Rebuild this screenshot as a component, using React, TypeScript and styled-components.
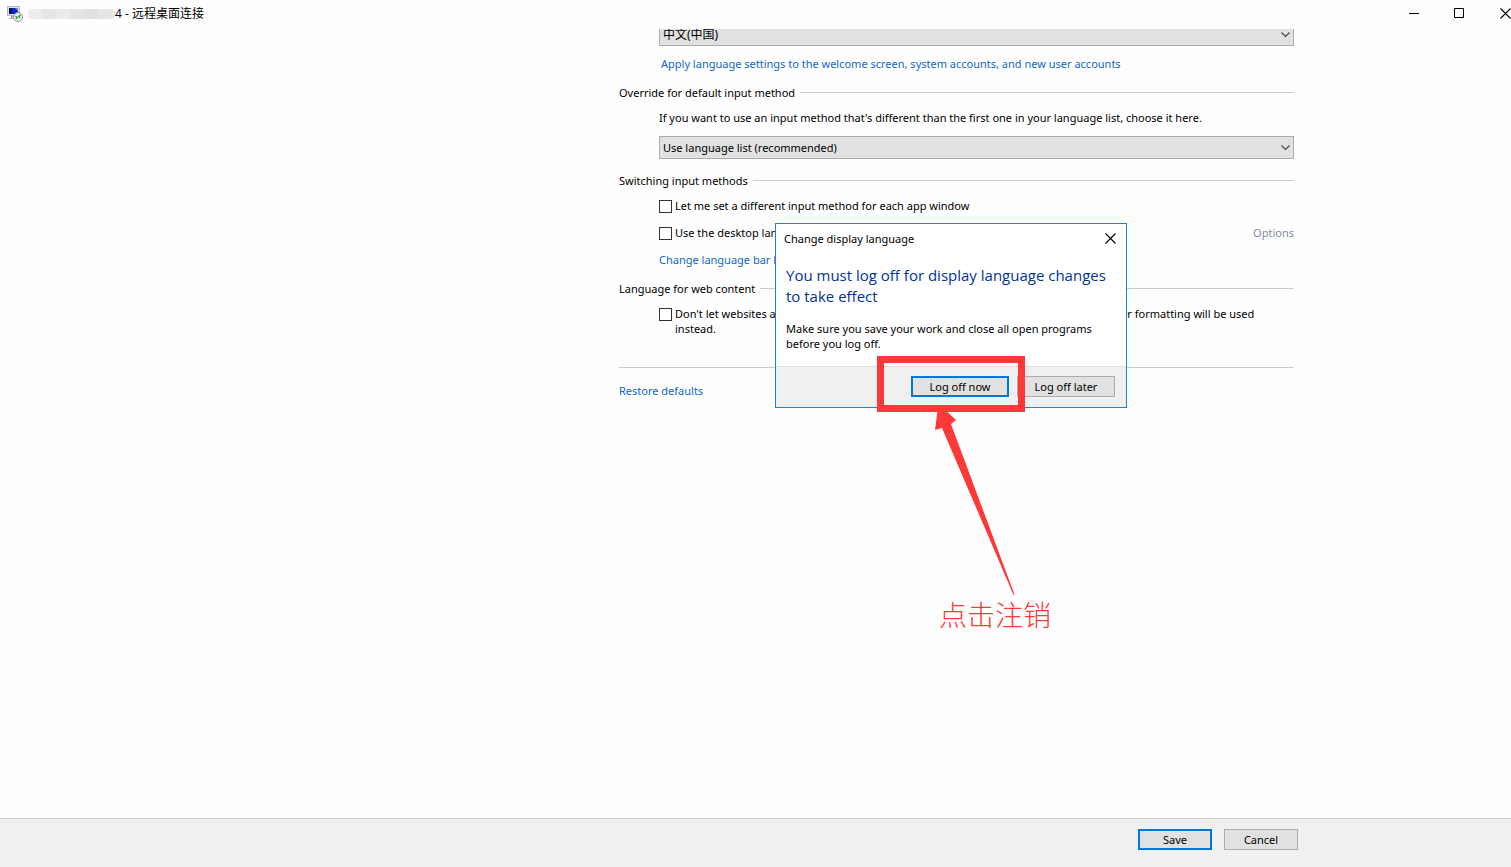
import React from 'react';
import styled, { createGlobalStyle } from 'styled-components';

const GlobalStyle = createGlobalStyle`
  * { box-sizing: border-box; }
  body {
    margin: 0;
    background: #fefefe;
    color: #000;
    font: 11px/15px "Noto Sans", "Noto Sans CJK SC", sans-serif;
  }
  button, select, input { font: inherit; color: inherit; }
`;

const Page = styled.div`
  display: flex;
  flex-direction: column;
  min-height: 100vh;
`;

const TitleBar = styled.header`
  display: flex;
  align-items: center;
  height: 29px;
  padding-left: 7px;
  overflow: hidden;
`;

const AppTitle = styled.h1`
  display: flex;
  align-items: center;
  margin: 0;
  padding-bottom: 2px;
  font: 12px/18px "Open Sans", "Noto Sans CJK SC", sans-serif;
`;

const Redacted = styled.span`
  width: 87px;
  height: 10px;
  margin-left: 5px;
  border-radius: 4px;
  background: linear-gradient(90deg, #ededed 0 14px, #e6e6e6 14px 28px, #ebebec 28px 42px, #e4e4e6 42px 56px, #e0e1e3 56px 70px, #e6e6e6 70px);
`;

const WindowControls = styled.div`
  display: flex;
  margin: 0 -19px 3px auto;
`;

const GlyphButton = styled.button<{ $width: number }>`
  display: flex;
  align-items: center;
  justify-content: center;
  width: ${p => p.$width}px;
  height: 26px;
  padding: 0;
  border: 0;
  background: transparent;
`;

const ScrollArea = styled.main`
  flex: 1;
  overflow: hidden;
  padding: 0 217px 0 619px;
`;

const Settings = styled.div`
  position: relative;
  display: flow-root;
`;

const Indented = styled.div`
  padding-left: 40px;
`;

const SelectFrame = styled.div<{ $scrolled?: boolean }>`
  position: relative;
  margin-top: ${p => (p.$scrolled ? -6 : 11)}px;
  font-size: ${p => (p.$scrolled ? 12 : 11)}px;

  svg {
    position: absolute;
    top: 8px;
    right: 4px;
    pointer-events: none;
  }
`;

const Select = styled.select`
  display: block;
  width: 100%;
  height: 23px;
  padding: 0 20px 0 3px;
  border: 1px solid #adadad;
  border-radius: 0;
  background: #e1e1e1;
  appearance: none;
`;

const Link = styled.a<{ $muted?: boolean }>`
  color: ${p => (p.$muted ? '#838a9a' : '#0f66d0')};
  text-decoration: none;
`;

const LinkLine = styled.div`
  padding: 10px 0 0 2px;
`;

const SectionTitle = styled.h2`
  display: flex;
  align-items: center;
  gap: 5px;
  margin: 14px 0 10px;
  font-size: 11px;
  line-height: 15px;
  font-weight: 400;

  &::after {
    content: "";
    flex: 1;
    height: 1px;
    background: #cccccc;
  }
`;

const Text = styled.p`
  margin: 0;
`;

const OptionRow = styled.div`
  display: flex;
  justify-content: space-between;
  margin-bottom: 12px;
`;

const CheckLabel = styled.label`
  display: flex;
  align-items: flex-start;
  gap: 3px;
  padding-right: 24px;
`;

const Checkbox = styled.input`
  flex: none;
  width: 13px;
  height: 13px;
  margin: 2px 0 0;
  border: 1px solid #333;
  background: #fff;
  appearance: none;
`;

const Restore = styled.div`
  margin-top: 31px;
  padding-top: 15px;
  border-top: 1px solid #cccccc;
`;

const Dialog = styled.section`
  position: absolute;
  top: 194px;
  left: 156px;
  width: 352px;
  border: 1px solid #1883d7;
  background: #fff;
`;

const DialogHeader = styled.header`
  display: flex;
  align-items: center;
  justify-content: space-between;
  height: 28px;
  padding-left: 8px;
`;

const DialogName = styled.h2`
  margin: 0;
  font-size: 11px;
  font-weight: 400;
`;

const DialogBody = styled.div`
  height: 114px;
  padding: 13px 10px 0;
`;

const Instruction = styled.h3`
  margin: 0 0 14px;
  color: #003399;
  font: 400 15px/21px "Open Sans", sans-serif;
  white-space: nowrap;
`;

const DialogActions = styled.div`
  display: flex;
  justify-content: flex-end;
  gap: 8px;
  height: 41px;
  padding: 9px 11px;
  border-top: 1px solid #dfdfdf;
  background: #f0f0f0;
`;

const Button = styled.button<{ $primary?: boolean; $width: number }>`
  width: ${p => p.$width}px;
  height: 21px;
  padding: 0;
  border: ${p => (p.$primary ? '2px solid #0078d7' : '1px solid #adadad')};
  background: #e1e1e1;
  line-height: 15px;
`;

const Highlight = styled.div`
  position: absolute;
  top: 132px;
  left: 101px;
  width: 148px;
  height: 56px;
  border: 7px solid #fd3838;
  pointer-events: none;
`;

const Arrow = styled.svg`
  position: absolute;
  top: 183px;
  left: 158px;
`;

const Note = styled.p`
  position: absolute;
  top: 370px;
  left: 163px;
  margin: 0;
  color: #fd3838;
  font: 300 28px/40px "Noto Sans CJK SC", serif;
  white-space: nowrap;
`;

const Footer = styled.footer`
  display: flex;
  justify-content: flex-end;
  gap: 12px;
  height: 49px;
  padding: 10px 213px 0 0;
  border-top: 1px solid #cccccc;
  background: #f0f0f0;
`;

const RemoteIcon = () => (
  <svg width="16" height="16" viewBox="0 0 16 16" aria-hidden="true">
    <path d="M.5.5h12v9H.5z" fill="#e3e4e6" stroke="#b4b8bf" />
    <path d="M2 2h9v6H2z" fill="#1226c8" />
    <path d="M2 2h3v6H2z" fill="#071078" />
    <path d="M8 2h3v3z" fill="#6f8af0" />
    <path d="M4 10h5v2H4zM2 12h6v1H2z" fill="#aab0b8" />
    <circle cx="11" cy="11" r="4.500" fill="#f3f5f2" stroke="#8d928f" />
    <path d="M8.500 10l1.800 1.500L8.800 13M13.500 8.800L11.700 10.500l1.600 1.500" fill="none" stroke="#2f9d2a" strokeWidth="1.300" />
  </svg>
);

const CloseGlyph = () => (
  <svg width="11" height="11" viewBox="0 0 11 11" aria-hidden="true">
    <path d="M.5.5l10 10M10.500.5l-10 10" stroke="#000" strokeWidth="1.100" />
  </svg>
);

const Chevron = () => (
  <svg width="9" height="7" viewBox="0 0 9 7" aria-hidden="true">
    <path d="M.5 1.500l4 4 4-4" fill="none" stroke="#444" strokeWidth="1.200" />
  </svg>
);

export default function App() {
  return (
    <Page>
      <GlobalStyle />
      <TitleBar>
        <AppTitle>
          <RemoteIcon />
          <Redacted />
          4 - 远程桌面连接
        </AppTitle>
        <WindowControls>
          <GlyphButton $width={45} aria-label="Minimize">
            <svg width="10" height="10" viewBox="0 0 10 10"><path d="M0 5.500h10" stroke="#000" /></svg>
          </GlyphButton>
          <GlyphButton $width={45} aria-label="Maximize">
            <svg width="10" height="10" viewBox="0 0 10 10"><path d="M.5.5h9v9h-9z" fill="none" stroke="#000" /></svg>
          </GlyphButton>
          <GlyphButton $width={49} aria-label="Close"><CloseGlyph /></GlyphButton>
        </WindowControls>
      </TitleBar>

      <ScrollArea>
        <Settings>
          <Indented>
            <SelectFrame $scrolled>
              <Select aria-label="Display language"><option>中文(中国)</option></Select>
              <Chevron />
            </SelectFrame>
            <LinkLine>
              <Link href="#accounts">Apply language settings to the welcome screen, system accounts, and new user accounts</Link>
            </LinkLine>
          </Indented>

          <SectionTitle>Override for default input method</SectionTitle>
          <Indented>
            <Text id="method">If you want to use an input method that's different than the first one in your language list, choose it here.</Text>
            <SelectFrame>
              <Select aria-labelledby="method"><option>Use language list (recommended)</option></Select>
              <Chevron />
            </SelectFrame>
          </Indented>

          <SectionTitle>Switching input methods</SectionTitle>
          <Indented>
            <OptionRow>
              <CheckLabel><Checkbox type="checkbox" />Let me set a different input method for each app window</CheckLabel>
            </OptionRow>
            <OptionRow>
              <CheckLabel><Checkbox type="checkbox" />Use the desktop language bar when it's available</CheckLabel>
              <Link href="#options" $muted>Options</Link>
            </OptionRow>
            <Link href="#hotkeys">Change language bar hot keys</Link>
          </Indented>

          <SectionTitle>Language for web content</SectionTitle>
          <Indented>
            <CheckLabel>
              <Checkbox type="checkbox" />
              Don't let websites access my language list. The language of your date, time, and number formatting will be used instead.
            </CheckLabel>
          </Indented>

          <Restore><Link href="#restore">Restore defaults</Link></Restore>

          <Dialog role="dialog" aria-labelledby="dialog-name">
            <DialogHeader>
              <DialogName id="dialog-name">Change display language</DialogName>
              <GlyphButton $width={31} aria-label="Close dialog"><CloseGlyph /></GlyphButton>
            </DialogHeader>
            <DialogBody>
              <Instruction>You must log off for display language changes<br />to take effect</Instruction>
              <Text>Make sure you save your work and close all open programs before you log off.</Text>
            </DialogBody>
            <DialogActions>
              <Button $primary $width={98}>Log off now</Button>
              <Button $width={98}>Log off later</Button>
            </DialogActions>
            <Highlight />
            <Arrow width="82" height="190" viewBox="0 0 82 190" aria-hidden="true">
              <path d="M4 0L1 23l7-2L79.500 188l1-.5L17 17l5-4L8 0z" fill="#fd3838" />
            </Arrow>
            <Note>点击注销</Note>
          </Dialog>
        </Settings>
      </ScrollArea>

      <Footer>
        <Button $primary $width={74}>Save</Button>
        <Button $width={74}>Cancel</Button>
      </Footer>
    </Page>
  );
}
